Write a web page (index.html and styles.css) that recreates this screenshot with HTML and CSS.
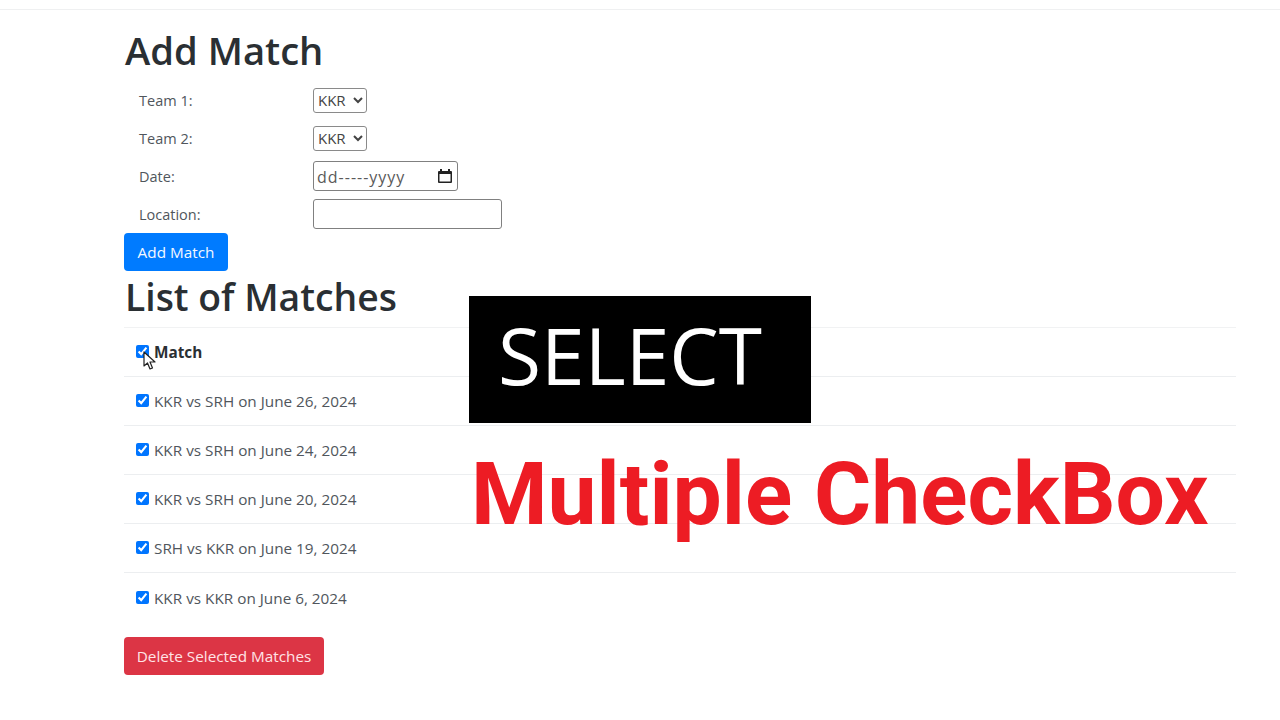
FILE: index.html
```html
<!DOCTYPE html>
<html lang="en">
<head>
<meta charset="utf-8">
<title>Add Match</title>
<link rel="stylesheet" href="styles.css">
</head>
<body>
<header class="topbar"></header>
<main class="container">
  <h2 class="heading first">Add Match</h2>
  <form class="match-form">
    <label class="field-label">Team 1:</label>
    <div class="field"><select class="team"><option>KKR</option></select></div>
    <label class="field-label">Team 2:</label>
    <div class="field"><select class="team"><option>KKR</option></select></div>
    <label class="field-label">Date:</label>
    <div class="field">
      <div class="date-input">
        <span class="date-text">dd-----yyyy</span>
        <svg class="cal" viewBox="0 0 16 16" width="16" height="16"><path d="M3 1v2H2a1 1 0 0 0-1 1v10a1 1 0 0 0 1 1h12a1 1 0 0 0 1-1V4a1 1 0 0 0-1-1h-1V1h-2v2H5V1zM2.500 6h11v7.500h-11z" fill="#222"/></svg>
      </div>
    </div>
    <label class="field-label">Location:</label>
    <div class="field"><input class="location" type="text"></div>
  </form>
  <button class="btn btn-blue" type="button">Add Match</button>
  <h2 class="heading second">List of Matches</h2>
  <div class="table">
    <div class="row head"><span class="cell"><input type="checkbox" checked><b>Match</b></span></div>
    <div class="row"><span class="cell"><input type="checkbox" checked>KKR vs SRH on June 26, 2024</span></div>
    <div class="row"><span class="cell"><input type="checkbox" checked>KKR vs SRH on June 24, 2024</span></div>
    <div class="row"><span class="cell"><input type="checkbox" checked>KKR vs SRH on June 20, 2024</span></div>
    <div class="row"><span class="cell"><input type="checkbox" checked>SRH vs KKR on June 19, 2024</span></div>
    <div class="row last"><span class="cell"><input type="checkbox" checked>KKR vs KKR on June 6, 2024</span></div>
  </div>
  <button class="btn btn-red" type="button">Delete Selected Matches</button>
</main>
<svg class="pointer" viewBox="0 0 14 20" width="14" height="20"><path d="M1 1v14l3.500-3 2.500 6 2.500-1-2.500-6h5z" fill="#fff" stroke="#222" stroke-width="1.200" stroke-linejoin="round"/></svg>
<div class="select-banner">SELECT</div>
<div class="multi-title">Multiple CheckBox</div>
</body>
</html>
```
FILE: styles.css
```css
* { box-sizing: border-box; }
html, body { margin: 0; height: 720px; overflow: hidden; background: #fff; }
body { position: relative; font-family: "Open Sans", "Noto Sans", sans-serif; font-size: 15px; color: #212529; }
.topbar { height: 10px; border-bottom: 1px solid #eff0f1; }
.container { width: 1112px; margin-left: 124px; }
.heading { margin: 0; font-weight: 600; line-height: 42px; color: #2a2f33; }
.first { margin-top: 19px; margin-left: 1px; font-size: 38.200px; }
.second { margin-top: 5px; margin-left: 1px; font-size: 37.300px; }
.match-form { display: grid; grid-template-columns: 174px 1fr; grid-auto-rows: 38px; margin-top: 10px; padding-left: 15px; align-items: center; }
.field-label { color: #50565c; font-size: 14.500px; }
.field { display: flex; align-items: center; }
.team { width: 54px; height: 25px; font-family: inherit; font-size: 15px; color: #444; background: #fff; border: 1px solid #8a8a8a; border-radius: 3px; padding: 0; }
.date-input { display: flex; align-items: center; justify-content: space-between; width: 145px; height: 30px; padding: 1px 3px 0; border: 1px solid #808080; border-radius: 3px; font-size: 16px; letter-spacing: 1px; color: #5a5a5a; }
.cal { margin: -1px 1px 0 0; }
.location { width: 189px; height: 30px; border: 1px solid #808080; border-radius: 3px; padding: 0 3px; }
.btn { display: block; border: 1px solid transparent; border-radius: 4px; color: #f2f8ff; font-family: inherit; font-size: 15.300px; padding: 0; height: 38px; white-space: nowrap; }
.btn-blue { background: #007bff; width: 104px; margin-top: 0; }
.btn-red { background: #dc3545; width: 200px; margin-top: 15px; color: #ffe3e6; }
.table { margin-top: 9px; border-top: 1px solid #f1f2f3; }
.row { height: 49px; border-bottom: 1px solid #eceef0; display: flex; align-items: center; padding: 0 0 0 12px; color: #50565c; font-size: 15.300px; }
.last { border-bottom: 0; }
.head { color: #2a2f33; }
.cell { display: flex; align-items: center; }
.cell input { width: 13px; height: 13px; margin: 0 5px 1px 0; accent-color: #0075ff; }
.head b { font-weight: 700; }
.pointer { position: absolute; left: 143px; top: 351px; }
.select-banner { position: absolute; left: 469px; top: 296px; width: 342px; height: 127px; background: #000; color: #fff; font-size: 78.500px; font-weight: 500; line-height: 118px; padding-left: 29px; font-family: "Open Sans", sans-serif; }
.multi-title { position: absolute; left: 471px; top: 444px; font-family: Roboto, sans-serif; font-weight: 700; font-size: 87.500px; line-height: 100px; color: #ed1c24; white-space: nowrap; }
```
